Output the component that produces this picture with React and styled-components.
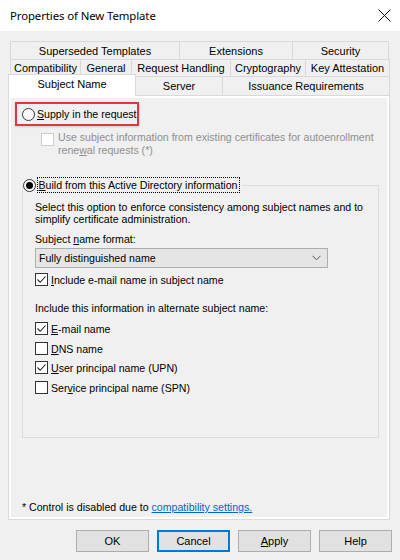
import React from 'react'
import styled, { createGlobalStyle } from 'styled-components'

const GlobalStyle = createGlobalStyle`
  body {
    margin: 0;
    background: #f0f0f0;
    font-family: "Liberation Sans", Arial, sans-serif;
    font-size: 10.6px;
    color: #000;
  }
`

const Window = styled.div`
  width: 400px;
  height: 560px;
  background: #f0f0f0;
  display: flex;
  flex-direction: column;
`

const TitleBar = styled.div`
  height: 31px;
  background: #fff;
  display: flex;
  align-items: center;
  justify-content: space-between;
  padding: 0 9px 0 10px;
  box-sizing: border-box;
`

const Title = styled.div`
  font-family: "Noto Sans", sans-serif;
  font-size: 11.4px;
  letter-spacing: -0.1px;
`

const Body = styled.div`
  padding: 10px 10px 0 8px;
`

const TabRow = styled.div`
  display: flex;
  height: ${p => p.h || 18}px;
  padding-left: ${p => p.indent || 0}px;
`

const Tab = styled.div`
  width: ${p => p.w}px;
  box-sizing: border-box;
  border: 1px solid #d9d9d9;
  border-bottom: none;
  margin-left: -1px;
  background: #f0f0f0;
  display: flex;
  align-items: center;
  justify-content: center;
  font-size: 11px;
  white-space: nowrap;
  &:first-child { margin-left: 0; }
`

const ActiveTab = styled(Tab)`
  background: #fff;
  height: 22px;
  margin-top: -2px;
  position: relative;
  z-index: 1;
  padding-bottom: 4px;
`

const Panel = styled.div`
  height: 425px;
  width: 382px;
  box-sizing: border-box;
  border: 1px solid #d9d9d9;
  background: #fff;
  padding: 2px;
`

const Page = styled.div`
  height: 100%;
  background: #f0f0f0;
  padding: 4px 0 0 4px;
  box-sizing: border-box;
  display: flex;
  flex-direction: column;
  white-space: nowrap;
`

const Highlight = styled.div`
  align-self: flex-start;
  border: 2px solid #e0363c;
  height: 24px;
  width: 124px;
  box-sizing: border-box;
  display: flex;
  align-items: center;
  padding-left: 5px;
  box-shadow: 0 1px 2px rgba(0,0,0,0.15);
`

const Radio = styled.span`
  width: 13px;
  height: 13px;
  box-sizing: border-box;
  border-radius: 50%;
  border: 1px solid #333;
  background: #fff;
  flex: none;
  display: flex;
  align-items: center;
  justify-content: center;
  margin-right: 2px;
  &::after {
    content: "";
    width: 7px;
    height: 7px;
    border-radius: 50%;
    background: ${p => (p.checked ? '#000' : 'transparent')};
  }
`

const Box = styled.span`
  width: 13px;
  height: 13px;
  box-sizing: border-box;
  border: 1px solid ${p => (p.disabled ? '#cccccc' : '#333')};
  background: #fff;
  flex: none;
  display: flex;
  align-items: center;
  justify-content: center;
  margin-right: 3px;
`

const DisabledRow = styled.div`
  display: flex;
  align-items: flex-start;
  margin: 5px 0 0 26px;
  color: #8f8f8f;
  line-height: 13px;
  ${Box} { margin-top: 2px; margin-right: 4px; }
`

const Group = styled.fieldset`
  margin: 20px 0 0 7px;
  padding: 0 0 0 12px;
  width: 357px;
  height: 261px;
  box-sizing: border-box;
  border: 1px solid #dcdcdc;
`

const Legend = styled.legend`
  display: flex;
  align-items: center;
  padding: 0 3px 0 0;
  margin-left: -12.5px;
  height: 16px;
`

const Focus = styled.span`
  outline: 1px dotted #000;
  padding: 0 1px;
  line-height: 14px;
`

const Text = styled.div`
  line-height: ${p => p.lh || 12}px;
  margin-top: ${p => p.mt || 0}px;
`

const Select = styled.div`
  margin-top: 3px;
  width: 293px;
  height: 20px;
  box-sizing: border-box;
  border: 1px solid #adadad;
  background: #e5e5e5;
  display: flex;
  align-items: center;
  justify-content: space-between;
  padding: 0 6px 0 3px;
`

const Check = styled.label`
  display: flex;
  align-items: center;
  height: 13px;
  margin-top: ${p => p.mt || 0}px;
`

const Footnote = styled.div`
  margin: auto 0 3px 7px;
  line-height: 14px;
`

const Link = styled.a`
  color: #0066cc;
  text-decoration: underline;
`

const ButtonBar = styled.div`
  display: flex;
  justify-content: flex-end;
  gap: 8px;
  margin: 10px -2px 0 0;
`

const Button = styled.button`
  width: 73px;
  height: 22px;
  box-sizing: border-box;
  border: 1px solid ${p => (p.primary ? '#0078d7' : '#adadad')};
  box-shadow: ${p => (p.primary ? 'inset 0 0 0 1px #0078d7' : 'none')};
  background: #e1e1e1;
  font-family: "Liberation Sans", Arial, sans-serif;
  font-size: 11px;
  color: #000;
  padding: 0;
`

const U = styled.span`
  text-decoration: underline;
`

function CheckMark() {
  return (
    <svg width="11" height="11" viewBox="0 0 11 11">
      <path d="M1.5 5.5 L4.2 8.3 L9.5 2.5" fill="none" stroke="#222" strokeWidth="1.1" />
    </svg>
  )
}

function CheckItem({ checked, mt, children }) {
  return (
    <Check mt={mt}>
      <Box>{checked && <CheckMark />}</Box>
      {children}
    </Check>
  )
}

export default function App() {
  return (
    <Window>
      <GlobalStyle />
      <TitleBar>
        <Title>Properties of New Template</Title>
        <svg width="13" height="13" viewBox="0 0 13 13">
          <path d="M0.5 0.5 L12.5 12.5 M12.5 0.5 L0.5 12.5" stroke="#111" strokeWidth="1" />
        </svg>
      </TitleBar>
      <Body>
        <TabRow indent={2}>
          <Tab w={170}>Superseded Templates</Tab>
          <Tab w={114}>Extensions</Tab>
          <Tab w={97}>Security</Tab>
        </TabRow>
        <TabRow indent={2} h={17}>
          <Tab w={71}>Compatibility</Tab>
          <Tab w={52}>General</Tab>
          <Tab w={100}>Request Handling</Tab>
          <Tab w={76}>Cryptography</Tab>
          <Tab w={85}>Key Attestation</Tab>
        </TabRow>
        <TabRow h={19}>
          <ActiveTab w={128}>Subject Name</ActiveTab>
          <Tab w={88}>Server</Tab>
          <Tab w={168}>Issuance Requirements</Tab>
        </TabRow>
        <Panel>
          <Page>
            <Highlight>
              <Radio />
              <Text><U>S</U>upply in the request</Text>
            </Highlight>
            <DisabledRow>
              <Box disabled />
              <div>
                Use subject information from existing certificates for autoenrollment<br />
                rene<U>w</U>al requests (*)
              </div>
            </DisabledRow>
            <Group>
              <Legend>
                <Radio checked />
                <Focus><U>B</U>uild from this Active Directory information</Focus>
              </Legend>
              <Text mt={8}>
                Select this option to enforce consistency among subject names and to<br />
                simplify certificate administration.
              </Text>
              <Text mt={8}>Subject <U>n</U>ame format:</Text>
              <Select>
                <span>Fully distinguished name</span>
                <svg width="9" height="6" viewBox="0 0 9 6">
                  <path d="M0.5 0.8 L4.5 4.8 L8.5 0.8" fill="none" stroke="#555" strokeWidth="1" />
                </svg>
              </Select>
              <CheckItem checked mt={5}><U>I</U>nclude e-mail name in subject name</CheckItem>
              <Text mt={16}>Include this information in alternate subject name:</Text>
              <CheckItem checked mt={8}><U>E</U>-mail name</CheckItem>
              <CheckItem mt={7}><U>D</U>NS name</CheckItem>
              <CheckItem checked mt={6}><U>U</U>ser principal name (UPN)</CheckItem>
              <CheckItem mt={7}>Ser<U>v</U>ice principal name (SPN)</CheckItem>
            </Group>
            <Footnote>
              * Control is disabled due to <Link href="#">compatibility settings.</Link>
            </Footnote>
          </Page>
        </Panel>
        <ButtonBar>
          <Button>OK</Button>
          <Button primary>Cancel</Button>
          <Button><U>A</U>pply</Button>
          <Button>Help</Button>
        </ButtonBar>
      </Body>
    </Window>
  )
}
